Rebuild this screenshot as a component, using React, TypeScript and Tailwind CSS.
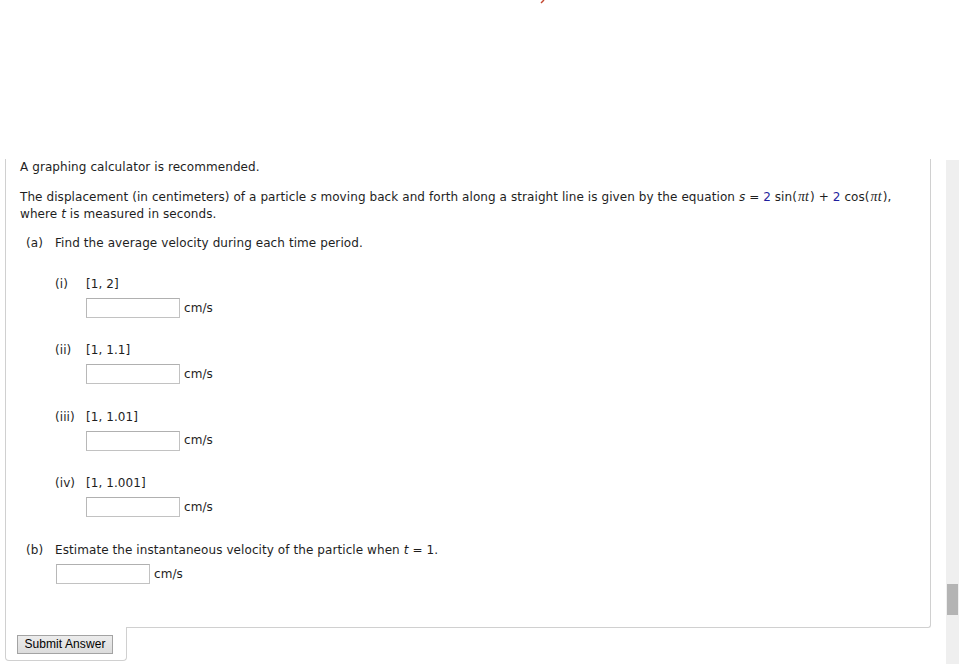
import React from "react";

function Answer({ ml }: { ml: string }) {
  return (
    <div className={`flex items-center mt-[5px] ${ml}`}>
      <div className="w-[94px] h-[20px] border border-[#c2c2c2] border-t-[#b0b0b0] border-l-[#b8b8b8] bg-white" />
      <span className="ml-[4px]">cm/s</span>
    </div>
  );
}

function Part({ roman, interval, first }: { roman: string; interval: string; first?: boolean }) {
  return (
    <div className={first ? "mt-[24px]" : "mt-[24.4px]"}>
      <div className="flex h-[17px]">
        <span className="w-[31px]">{roman}</span>
        <span>{interval}</span>
      </div>
      <Answer ml="ml-[31px]" />
    </div>
  );
}

export default function App() {
  return (
    <div className="relative w-[959px] h-[664px] overflow-hidden bg-white text-[12px] leading-[17px] tracking-[0.08px] text-[#1e1e1e] font-['DejaVu_Sans',Verdana,sans-serif]">
      <svg className="absolute left-[538px] top-0" width="8" height="5" viewBox="0 0 8 5">
        <line x1="6" y1="0" x2="3" y2="3" stroke="#c2452d" strokeWidth="1.4" />
      </svg>
      <div className="h-[160px]" />
      <div className="flex">
        <div className="w-[946px]">
          <div className="ml-[5px] w-[926px] border-l border-r border-b border-[#d0d0d0] rounded-br-[3px] pl-[14px] pb-[43px]">
            <p className="-mt-[1px] h-[17px]">A graphing calculator is recommended.</p>
            <p className="mt-[12px] h-[34px]">
              The displacement (in centimeters) of a particle <i>s</i> moving back and forth along a straight line is
              given by the equation <i>s</i> = <span className="text-[#1f1f9e]">2</span> sin(
              <i className="px-[1px] font-['Liberation_Serif',serif] text-[14px] leading-[17px]">πt</i>) +{" "}
              <span className="text-[#1f1f9e]">2</span> cos(
              <i className="px-[1px] font-['Liberation_Serif',serif] text-[14px] leading-[17px]">πt</i>),
              <br />
              where <i>t</i> is measured in seconds.
            </p>
            <div className="ml-[6px]">
              <div className="flex h-[17px] mt-[13px]">
                <span className="w-[29px]">(a)</span>
                <span>Find the average velocity during each time period.</span>
              </div>
              <div className="ml-[29px]">
                <Part roman="(i)" interval="[1, 2]" first />
                <Part roman="(ii)" interval="[1, 1.1]" />
                <Part roman="(iii)" interval="[1, 1.01]" />
                <Part roman="(iv)" interval="[1, 1.001]" />
              </div>
              <div className="mt-[25px]">
                <div className="flex h-[17px]">
                  <span className="w-[29px]">(b)</span>
                  <span>
                    Estimate the instantaneous velocity of the particle when <i>t</i> = 1.
                  </span>
                </div>
                <Answer ml="ml-[30px]" />
              </div>
            </div>
          </div>
          <div className="relative -mt-[1px] ml-[5px] w-[122px] h-[34px] bg-white border-l border-r border-b border-[#d0d0d0] rounded-b-[4px] pl-[11px] pt-[8px]">
            <button className="w-[96px] h-[19px] border border-[#a3a3a3] bg-gradient-to-b from-[#ececec] to-[#dcdcdc] text-[12px] leading-[17px] text-black font-['Liberation_Sans',Arial,sans-serif]">
              Submit Answer
            </button>
          </div>
        </div>
        <div className="w-[13px] h-[504px] bg-[#efefef]">
          <div className="mt-[424px] ml-[1px] w-[11px] h-[31px] bg-[#b4b4b4]" />
        </div>
      </div>
    </div>
  );
}
